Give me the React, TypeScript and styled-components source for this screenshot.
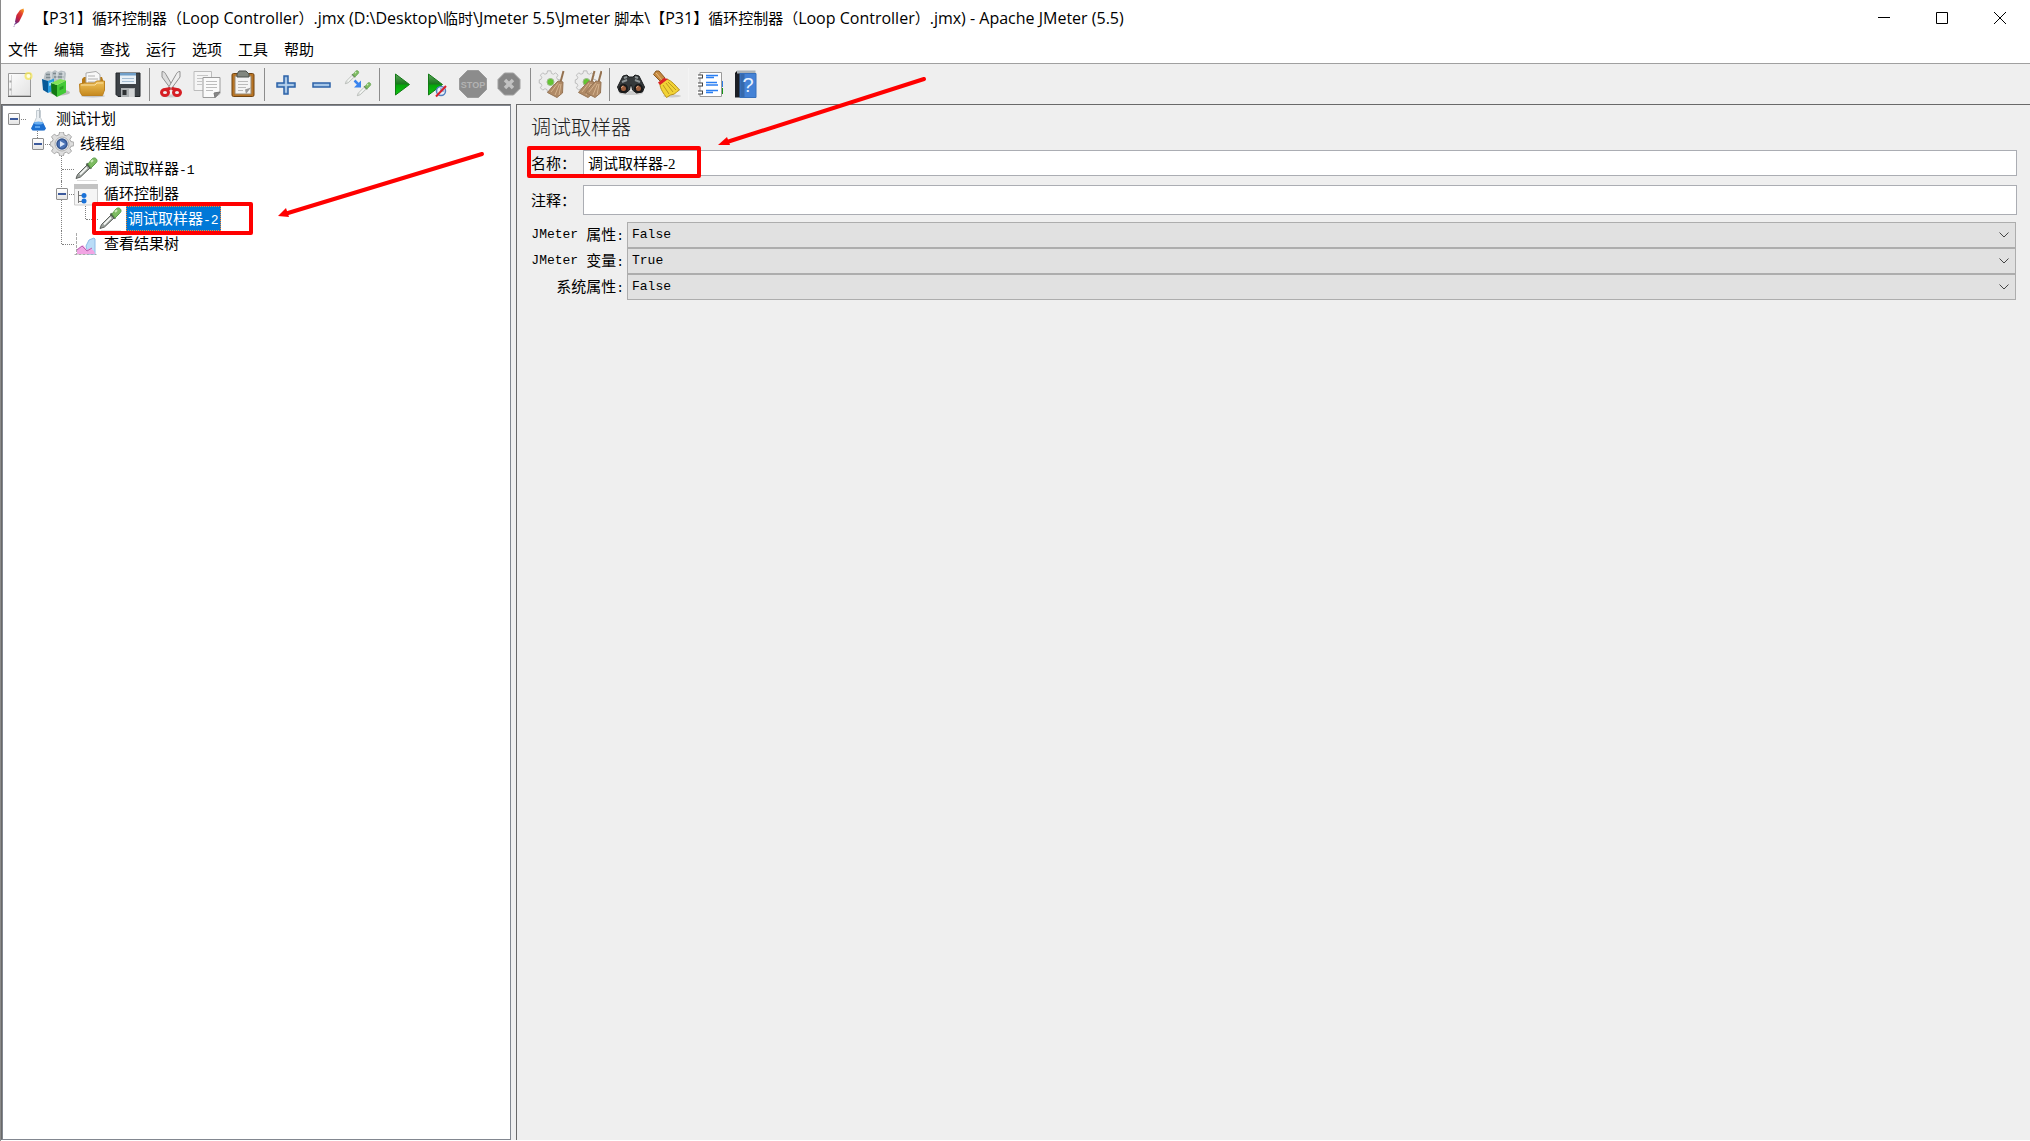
import React from "react";
import styled, { createGlobalStyle, css } from "styled-components";

const GlobalStyle = createGlobalStyle`
  * { box-sizing: border-box; }
  body { margin: 0; background: #fff; }
  button, input, select { font: inherit; color: inherit; margin: 0; }
`;

const uiFont = `"Open Sans", "Noto Sans CJK SC", sans-serif`;
const songFont = `"Noto Sans CJK SC", sans-serif`;

const Window = styled.div`
  position: relative;
  display: flex;
  flex-direction: column;
  min-height: 100vh;
  padding-bottom: 1px;
  border-left: 1px solid #8a8a8a;
  background: #fff;
  color: #000;
  font: 15px/20px ${songFont};
`;

const TitleBar = styled.header`
  display: flex;
  align-items: center;
  height: 36px;
  padding: 0 1px 0 10px;
  font: 15px/20px ${uiFont};
`;

const Title = styled.h1`
  flex: 1;
  margin: 0;
  padding-left: 9px;
  font: inherit;
  white-space: pre;
`;

const Latin = styled.span`
  font-size: 16px;
`;

const WindowButton = styled.button`
  display: flex;
  align-items: center;
  justify-content: center;
  width: 58px;
  height: 36px;
  padding: 0;
  border: 0;
  background: none;
`;

const MenuBar = styled.nav`
  display: flex;
  gap: 16px;
  height: 28px;
  padding: 3px 7px 0;
  border-bottom: 1px solid #a0a0a0;
`;

const MenuItem = styled.button`
  height: 20px;
  padding: 0;
  border: 0;
  background: none;
  font: 15px/20px ${uiFont};
`;

const ToolBar = styled.div`
  display: flex;
  align-items: center;
  height: 40px;
  padding: 0 1px;
  background: #efefef;
`;

const ToolButton = styled.button`
  display: flex;
  align-items: center;
  justify-content: center;
  width: 36px;
  height: 36px;
  padding: 0;
  border: 0;
  background: none;
`;

const Separator = styled.span<{ $faint?: boolean }>`
  width: 1px;
  height: 33px;
  margin: 0 3px;
  background: ${(p) => (p.$faint ? "#f4f4f4" : "#8c8c8c")};
`;

const Content = styled.main`
  flex: 1;
  display: grid;
  grid-template-columns: 510px minmax(0, 1fr);
  column-gap: 5px;
  background: #efefef;
`;

const TreePane = styled.section`
  position: relative;
  border: 1px solid #828790;
  border-top-color: #696969;
  border-left-color: #696969;
  box-shadow: inset 1px 1px 0 #828790;
  padding: 1px 0 0 1px;
  background: #fff;
`;

const Branch = styled.ul<{ $nested?: boolean }>`
  list-style: none;
  margin: 0;
  padding: 0 0 0 ${(p) => (p.$nested ? 24 : 0)}px;
`;

const Node = styled.li<{ $last?: boolean; $root?: boolean }>`
  position: relative;
  &::before {
    content: "";
    display: ${(p) => (p.$root ? "none" : "block")};
    position: absolute;
    left: 10px;
    top: 0;
    height: ${(p) => (p.$last ? "13px" : "100%")};
    border-left: 1px dotted #808080;
  }
`;

const NodeRow = styled.div`
  position: relative;
  display: flex;
  align-items: center;
  height: 25px;
  padding-left: 5px;
  &::before {
    content: "";
    position: absolute;
    left: 11px;
    top: 13px;
    width: 12px;
    border-top: 1px dotted #808080;
  }
`;

const Expander = styled.button`
  position: relative;
  display: flex;
  align-items: center;
  justify-content: center;
  width: 12px;
  height: 12px;
  margin-right: 6px;
  padding: 0;
  border: 1px solid #8f8f8f;
  border-radius: 1px;
  background: linear-gradient(#fff, #e4e4e4);
  &::before {
    content: "";
    width: 8px;
    height: 2px;
    background: #3c5a9c;
  }
`;

const ExpanderSpace = styled.span`
  width: 18px;
`;

const NodeIcon = styled.span`
  position: relative;
  display: flex;
  width: 24px;
  height: 24px;
  margin-right: 4px;
`;

const NodeLabel = styled.span<{ $selected?: boolean }>`
  height: 25px;
  padding: 0 2px;
  line-height: 24px;
  white-space: nowrap;
  ${(p) =>
    p.$selected &&
    css`
      color: #fff;
      background: #0078d7;
      outline: 1px dotted #ff8728;
      outline-offset: -1px;
    `}
`;

const Mono = styled.span`
  font: 13px/20px "Liberation Mono", monospace;
`;

const NodeHighlight = styled.span`
  position: absolute;
  left: 17px;
  top: -4px;
  width: 161px;
  height: 33px;
  border: 4px solid #f00;
  border-radius: 2px;
`;

const EditorPane = styled.section`
  padding: 8px 13px 0 14px;
  border-top: 1px solid #696969;
  border-left: 1px solid #696969;
`;

const Heading = styled.h2`
  margin: 0 0 9px;
  color: #222;
  font: 20px/28px ${songFont};
  font-weight: 300;
`;

const Field = styled.div`
  position: relative;
  display: flex;
  align-items: center;
  margin-bottom: 9px;
`;

const FieldLabel = styled.label`
  width: 52px;
  white-space: nowrap;
`;

const TextInput = styled.input<{ $tall?: boolean }>`
  flex: 1;
  min-width: 0;
  height: ${(p) => (p.$tall ? 30 : 26)}px;
  padding: 0 4px 2px;
  border: 1px solid #abadb3;
  border-radius: 0;
  outline: 0;
  background: #fff;
  font: 15px/20px "Liberation Serif", "Noto Sans CJK SC", serif;
`;

const FieldHighlight = styled.span`
  position: absolute;
  left: -4px;
  top: -4px;
  width: 174px;
  height: 32px;
  border: 4px solid #f00;
  border-radius: 2px;
`;

const Options = styled.div`
  display: grid;
  grid-template-columns: 93px minmax(0, 1fr);
  column-gap: 3px;
  margin-top: -2px;
  padding-right: 1px;
`;

const OptionLabel = styled.label`
  display: flex;
  align-items: center;
  justify-content: flex-end;
  gap: 8px;
  white-space: nowrap;
`;

const SelectBox = styled.div`
  position: relative;
  svg {
    position: absolute;
    right: 7px;
    top: 10px;
    pointer-events: none;
  }
`;

const Select = styled.select`
  display: block;
  appearance: none;
  width: 100%;
  height: 26px;
  padding: 0 4px;
  border: 1px solid #adadad;
  border-radius: 0;
  background: #e1e1e1;
  font: 13px/20px "Liberation Mono", monospace;
`;

const TreeArrow = styled.svg`
  position: absolute;
  left: 275px;
  top: 149px;
  pointer-events: none;
`;

const FieldArrow = styled.svg`
  position: absolute;
  left: 716px;
  top: 75px;
  pointer-events: none;
`;

function Svg({ children, size = 28 }: { children: React.ReactNode; size?: number }) {
  return (
    <svg width={size} height={size} viewBox={`0 0 ${size} ${size}`} aria-hidden="true">
      {children}
    </svg>
  );
}

function Feather() {
  return (
    <svg width="14" height="20" viewBox="0 0 14 20" aria-hidden="true">
      <defs>
        <linearGradient id="feather" x1="0.8" y1="0" x2="0.2" y2="1">
          <stop offset="0" stopColor="#f59a23" />
          <stop offset="0.3" stopColor="#e2402c" />
          <stop offset="0.65" stopColor="#c41f40" />
          <stop offset="1" stopColor="#6d2a7c" />
        </linearGradient>
      </defs>
      <path d="M12.500 0.500 L9 2 L5.500 7 L4 13.500 L5 16 L8 14 L11.500 7 L13 3Z" fill="url(#feather)" />
      <path d="M4.500 15 L3 18.500" stroke="#5b2a80" strokeWidth="1" strokeDasharray="2 1" />
    </svg>
  );
}

function NewIcon() {
  return (
    <Svg>
      <defs>
        <linearGradient id="page" x2="1" y2="1">
          <stop offset="0" stopColor="#fdfdfd" />
          <stop offset="1" stopColor="#e2e2e2" />
        </linearGradient>
      </defs>
      <path d="M2.500 3.500h22v22.500h-22z" fill="url(#page)" stroke="#9a9a9a" />
      <path d="M2 26.500h23" stroke="#666" />
      <path d="M5.500 5v20" stroke="#d4d4d4" />
      <path d="M3.500 11.500h2M3.500 19.500h2" stroke="#aaa" strokeWidth="2" />
      <circle cx="22.500" cy="6" r="4" fill="#f3e556" opacity="0.75" />
      <circle cx="22.500" cy="6" r="2" fill="#fffee0" />
    </Svg>
  );
}

function TemplatesIcon() {
  return (
    <Svg>
      <ellipse cx="18" cy="22.500" rx="10" ry="3" fill="#8c8c8c" opacity="0.5" />
      <path d="M1.500 9L3 3l3-2 4 1 3-2 3 2 3-1.500 4 1 1 2-1 8-12 3z" fill="#b9c1c5" />
      <path d="M4 4.500h4M11 3.500h3M17 4h4M4 7.500h5M12 7h10" stroke="#7d898f" strokeWidth="1.500" />
      <path d="M9 2v8M15 2v7M21 2v8" stroke="#e8ecee" />
      <path d="M0 9l6 2v12l-5-3z" fill="#075a99" />
      <path d="M6 11l6-2.500v12L6 23z" fill="#289ce0" />
      <path d="M7 13l4-1.500v3L7 16z" fill="#9edbf9" />
      <path d="M9 13l6 2v12l-5.500-4z" fill="#137813" />
      <path d="M15 15l9-4.500v12L15 27z" fill="#43c936" />
      <path d="M9 13l9-4 6 1.500-9 4.500z" fill="#81e356" />
      <path d="M17.500 17.500l4-2v3l-4 2z" fill="#2a9d24" />
    </Svg>
  );
}

function OpenIcon() {
  return (
    <Svg>
      <defs>
        <linearGradient id="folder" y2="1" x2="0">
          <stop offset="0" stopColor="#f1c45b" />
          <stop offset="1" stopColor="#c5881d" />
        </linearGradient>
      </defs>
      <ellipse cx="15" cy="26" rx="12" ry="1.500" fill="#999" opacity="0.5" />
      <path d="M4 9l2-2h18l1 3v6H4z" fill="#b77a16" />
      <path d="M8 3l10-1.500 4 3V17H8z" fill="#f8f8f8" stroke="#aaa" />
      <path d="M10 6h7M10 9h10M10 12h10" stroke="#b0b0b0" />
      <path d="M1.500 14l5-1h10l2-2h8v9l-2 5.500H4L2 22z" fill="url(#folder)" stroke="#bd8220" />
      <path d="M3 15h14l2-2h6" stroke="#f9dda0" fill="none" />
    </Svg>
  );
}

function SaveIcon() {
  return (
    <Svg>
      <path d="M2 3h24v23.500H4L2 24.500z" fill="#3d4247" stroke="#23272a" />
      <path d="M6 3h16v11H6z" fill="#e8f0f6" />
      <path d="M6 3h16v2.500H6z" fill="#6f9fc9" />
      <path d="M8 8.500h12M8 11.500h12" stroke="#a4bdd3" />
      <path d="M7 18h14v9H7z" fill="#aeb2b4" />
      <path d="M8.500 20h4v5h-4z" fill="#2d3032" />
      <path d="M15 19h5v8h-5z" fill="#d3d5d6" />
    </Svg>
  );
}

function CutIcon() {
  return (
    <Svg>
      <ellipse cx="14" cy="26" rx="10" ry="1.500" fill="#aaa" opacity="0.5" />
      <path d="M5 1.500c2 0 3 1 4 3l7.500 13-3 1L5 7z" fill="#ddd" stroke="#8f8f8f" />
      <path d="M23 1.500c-2 0-3 1-4 3l-7.500 13 3 1L23 7z" fill="#eee" stroke="#8f8f8f" />
      <g fill="none" stroke="#d61e24" strokeWidth="3">
        <ellipse cx="8" cy="22.500" rx="3.500" ry="3" />
        <ellipse cx="20" cy="22.500" rx="3.500" ry="3" />
        <path d="M8 19.500l5.500-1M20 19.500l-5.500-1" />
      </g>
    </Svg>
  );
}

function CopyIcon() {
  return (
    <Svg>
      <path d="M1 1.500h17.500v19H1z" fill="#f5f5f5" stroke="#bcbcbc" />
      <path d="M4 5.500h11M4 8.500h11M4 11.500h5M4 14.500h5" stroke="#c6c6c6" />
      <path d="M10 7.500h17v16l-5 4H10z" fill="#fafafa" stroke="#9b9b9b" />
      <path d="M13 11.500h11M13 14.500h11M13 17.500h11M13 20.500h7" stroke="#bcbcbc" />
      <path d="M27 22l-6 1 1 4.500z" fill="#888" stroke="#777" />
    </Svg>
  );
}

function PasteIcon() {
  return (
    <Svg>
      <rect x="3" y="3.500" width="22" height="23" rx="1.500" fill="#b87424" stroke="#714513" />
      <path d="M6 6h16v18H6z" fill="#f4f4f4" stroke="#9b8a72" />
      <path d="M8 4l2-3h7l3 3v3H8z" fill="#82877f" stroke="#4d514c" />
      <path d="M9 11.500h10M9 14.500h10M9 17.500h8M9 20.500h5" stroke="#bbb" />
      <path d="M22 17.500l-6 2 1 4.500z" fill="#999" />
    </Svg>
  );
}

function PlusIcon() {
  return (
    <Svg>
      <path d="M12 6h4v7h7v4h-7v7h-4v-7H5v-4h7z" fill="#92b8df" stroke="#2c62a8" strokeWidth="1.500" />
      <path d="M14 8v14M7 15h14" stroke="#c5daf0" />
    </Svg>
  );
}

function MinusIcon() {
  return (
    <Svg>
      <rect x="5" y="13" width="17" height="4" fill="#a5c6e8" stroke="#2c62a8" strokeWidth="1.500" />
    </Svg>
  );
}

function Dropper({ big }: { big?: boolean }) {
  return (
    <g>
      <path
        d="M2 21.500l1.500-4L13 8l3 3-9.500 9z"
        fill={big ? "#9da29e" : "#e2e5e2"}
        stroke={big ? "#5c615d" : "#a5aaa5"}
      />
      <path d="M6 17.500l7-7" stroke="#f4f6f4" strokeWidth="2" />
      <path d="M12.500 6.500l5 5" stroke={big ? "#4b5f48" : "#698062"} strokeWidth="2" />
      <path d="M14 7l4-5c2-2 5-1 5 2 0 1-1 2-2 3l-4 4z" fill="#7dbb61" stroke="#5d9c4a" />
      <path d="M17 5l2-2" stroke="#cbe8ba" strokeWidth="2" />
    </g>
  );
}

function ToggleIcon() {
  return (
    <Svg>
      <g transform="translate(0 0) scale(0.64)">
        <Dropper />
      </g>
      <g transform="translate(12 12) scale(0.64)">
        <Dropper />
      </g>
      <path d="M10.500 10.500l4 4" stroke="#3a84ee" strokeWidth="2.500" />
      <path d="M17 10.500v7h-7z" fill="#3a84ee" />
    </Svg>
  );
}

function PlayShape() {
  return (
    <g>
      <defs>
        <linearGradient id="play" x2="0" y2="1">
          <stop offset="0" stopColor="#5da75c" />
          <stop offset="0.480" stopColor="#17761b" />
          <stop offset="0.520" stopColor="#05a50a" />
          <stop offset="1" stopColor="#12c514" />
        </linearGradient>
      </defs>
      <path d="M8.500 4v21L22.500 14.500z" fill="url(#play)" stroke="#137a16" />
    </g>
  );
}

function PlayIcon() {
  return (
    <Svg>
      <PlayShape />
    </Svg>
  );
}

function PlayNoPauseIcon() {
  return (
    <Svg>
      <g transform="translate(-3 0)">
        <PlayShape />
      </g>
      <circle cx="18" cy="21" r="4.500" fill="#e8eef8" stroke="#5481c0" strokeWidth="1.500" />
      <path d="M18 18v3h3" stroke="#5481c0" fill="none" />
      <path d="M13 26.500l10-10.500" stroke="#d9212b" strokeWidth="2" />
    </Svg>
  );
}

function StopIcon() {
  return (
    <Svg>
      <path d="M8.500 0.500h11l8 8v11l-8 8h-11l-8-8v-11z" fill="#8c8c8c" stroke="#9b9b9b" />
      <text x="14" y="18" textAnchor="middle" fontFamily="Liberation Sans, sans-serif" fontWeight="700" fontSize="9" fill="#b3b3b3">
        STOP
      </text>
    </Svg>
  );
}

function ShutdownIcon() {
  return (
    <Svg>
      <path d="M9.500 3h9L25 9.500v9L18.500 25h-9L3 18.500v-9z" fill="#868686" stroke="#a0a0a0" />
      <path d="M10 10l8 8M18 10l-8 8" stroke="#c2c2c2" strokeWidth="3.500" />
    </Svg>
  );
}

const gearPath =
  "M10 1h4l.6 3 2.400 1 2.600-1.700 2.800 2.800L20.700 8.700l1 2.300 3 .6v3.800l-3 .6-1 2.300 1.700 2.600-2.800 2.800-2.600-1.700-2.400 1-.6 3h-4l-.6-3-2.400-1-2.600 1.700L1.600 20.900l1.700-2.600-1-2.300-2-.6v-3.800l2-.6 1-2.300L1.600 6.100l2.800-2.800L7 5l2.400-1z";

function Broom({ x }: { x: number }) {
  return (
    <g transform={`translate(${x} 0)`}>
      <path d="M17.500 1l-3 11" stroke="#94714f" strokeWidth="2" />
      <path d="M12 11l5 1-.5 11-5.500 4.500-9.500-5L6 17z" fill="#b08a66" stroke="#977555" />
      <path d="M12 13L5 22M13.500 14L9 25M15 14l-2 11" stroke="#d6b48f" />
    </g>
  );
}

function ClearIcon({ all }: { all?: boolean }) {
  return (
    <Svg>
      <g transform="translate(1 0) scale(0.85)">
        <path d={gearPath} fill="#ececec" stroke="#b5b5b5" />
      </g>
      <circle cx="12.500" cy="12" r="3.500" fill="#64c432" stroke="#9db98c" />
      {all && <Broom x={3} />}
      <Broom x={all ? 10 : 8} />
    </Svg>
  );
}

function SearchIcon() {
  return (
    <Svg>
      <ellipse cx="14" cy="23" rx="12" ry="2" fill="#aaa" opacity="0.5" />
      <path d="M6 6l4-1 2 2h4l2-2 4 1 5.500 11-2 5-6 1-4-3-1-5h-1l-1 5-4 3-6-1-2-5z" fill="#35393b" stroke="#1b1d1e" />
      <path d="M7 8l3-1M18 7l3 1M5 12l5-2M18 10l5 2" stroke="#8d9496" strokeWidth="2" />
      <circle cx="6.500" cy="18.500" r="3.500" fill="#9c5d3c" stroke="#191919" strokeWidth="2" />
      <circle cx="21.500" cy="18.500" r="3.500" fill="#9c5d3c" stroke="#191919" strokeWidth="2" />
      <path d="M4.500 18a2 2 0 0 1 2-2M19.500 18a2 2 0 0 1 2-2" stroke="#e6ab83" fill="none" />
    </Svg>
  );
}

function SearchResetIcon() {
  return (
    <Svg>
      <ellipse cx="19" cy="26" rx="9" ry="1.500" fill="#aaa" opacity="0.5" />
      <path d="M0.500 4.500L3 1l3 0 6 7-4 4z" fill="#c58a42" stroke="#89571f" />
      <path d="M3 3l6 7" stroke="#eabd7d" />
      <path d="M7 14l7-5c5 2 9 7 12.500 11l-3 2-2 2-4 1-4 2.500C11 24 7 19 7 14z" fill="#f2d335" stroke="#b8901a" />
      <path d="M10 15l6 9M13 13l7 9M15 12l8 8" stroke="#ba9720" />
      <path d="M5 12.500l6-4.500 4 1-8 6z" fill="#dc2424" />
    </Svg>
  );
}

function FunctionIcon() {
  return (
    <Svg>
      <path d="M25 11h2v6h-2z" fill="#2f7de5" />
      <path d="M25 18h2v6h-2z" fill="#149414" />
      <path d="M4 2.500h21.500v24H4z" fill="#fff" stroke="#9a9a9a" />
      <path d="M10 5.500h12M10 7.500h8M10 12.500h11M10 15h12M10 20.500h12M10 22.500h7" stroke="#2b7ff2" strokeWidth="1.500" />
      <path d="M2 6.500h5M2 14.500h5M2 22.500h5" stroke="#444" strokeWidth="4" />
      <path d="M1 6.500h5M1 14.500h5M1 22.500h5" stroke="#fff" strokeWidth="2" />
    </Svg>
  );
}

function HelpIcon() {
  return (
    <Svg>
      <path d="M5 0.500h18.500V4H4z" fill="#aab2b8" />
      <path d="M3 3l2-2v25.500H3z" fill="#111" />
      <path d="M3 3.500h5v24H3z" fill="#1b1f26" />
      <path d="M8 3.500h16v24H8z" fill="#4482d6" stroke="#3670bd" />
      <path d="M8.500 4h4v23h-4z" fill="#3669ac" />
      <text x="16" y="22" textAnchor="middle" fontFamily="Liberation Sans, sans-serif" fontSize="20" fill="#e8f2ff">
        ?
      </text>
    </Svg>
  );
}

function FlaskIcon() {
  return (
    <Svg size={24}>
      <path d="M10.500 3.500h4v7l4.500 10.500-1.500 2h-10l-1.500-2 4.500-10.500z" fill="#e9eef2" stroke="#c3cbd1" />
      <path d="M8 15.500h9l3 6-1.500 2h-12l-1.500-2z" fill="#1c6fd0" />
      <ellipse cx="12.500" cy="16" rx="4.500" ry="1.500" fill="#69aef0" />
      <path d="M9 20h5" stroke="#5ba4ee" strokeWidth="2" />
      <path d="M13.500 1v10" stroke="#b5bdc3" />
    </Svg>
  );
}

function GearIcon() {
  return (
    <Svg size={24}>
      <g transform="translate(0 -1) scale(0.960)">
        <path d={gearPath} fill="#dedede" stroke="#a3a3a3" />
      </g>
      <circle cx="12" cy="12" r="7" fill="#f0f0f0" stroke="#b0b0b0" />
      <circle cx="12" cy="12" r="5" fill="#4a72b5" stroke="#34558f" strokeWidth="1.500" />
      <path d="M10 9v6l5-3z" fill="#dce8fa" />
    </Svg>
  );
}

function DropperIcon() {
  return (
    <Svg size={24}>
      <path d="M3 23.500h20" stroke="#ddd" />
      <Dropper big />
    </Svg>
  );
}

function ControllerIcon() {
  return (
    <Svg size={24}>
      <path d="M0.500 2.500h23v20.500h-23z" fill="#f5f5f5" stroke="#ccc" />
      <path d="M0 2h24v5H0z" fill="#c3c3c3" />
      <path d="M4.500 9v12M4.500 13.500h4M4.500 19.500h4" stroke="#777" fill="none" />
      <circle cx="10" cy="13.500" r="2.500" fill="#1a72d8" />
      <circle cx="10" cy="19" r="2.500" fill="#1a72d8" />
    </Svg>
  );
}

function ResultsIcon() {
  return (
    <Svg size={24}>
      <path d="M2.500 1v22M0.500 22.500h22" stroke="#aaa" strokeDasharray="3 1" />
      <path d="M12 14l3-6 5-2 1 1v15h-7z" fill="#b9dcf7" stroke="#8dbbe6" />
      <path d="M3 22v-5l3-2 3-2 4 5 3-2 4 3 1 3z" fill="#f2a5e4" />
      <path d="M3 18l5-4 5 5 5-3" stroke="#b565b0" fill="none" />
    </Svg>
  );
}

type Tool = { label: string; icon: React.ReactNode; disabled?: boolean };

const toolGroups: Tool[][] = [
  [
    { label: "新建", icon: <NewIcon /> },
    { label: "模板", icon: <TemplatesIcon /> },
    { label: "打开", icon: <OpenIcon /> },
    { label: "保存", icon: <SaveIcon /> },
  ],
  [
    { label: "剪切", icon: <CutIcon /> },
    { label: "复制", icon: <CopyIcon /> },
    { label: "粘贴", icon: <PasteIcon /> },
  ],
  [
    { label: "全部展开", icon: <PlusIcon /> },
    { label: "全部折叠", icon: <MinusIcon /> },
    { label: "切换", icon: <ToggleIcon /> },
  ],
  [
    { label: "启动", icon: <PlayIcon /> },
    { label: "不停顿开始", icon: <PlayNoPauseIcon /> },
    { label: "停止", icon: <StopIcon />, disabled: true },
    { label: "关闭", icon: <ShutdownIcon />, disabled: true },
  ],
  [
    { label: "清除", icon: <ClearIcon /> },
    { label: "清除全部", icon: <ClearIcon all /> },
  ],
  [
    { label: "查找", icon: <SearchIcon /> },
    { label: "重置搜索", icon: <SearchResetIcon /> },
  ],
  [
    { label: "函数助手", icon: <FunctionIcon /> },
    { label: "帮助", icon: <HelpIcon /> },
  ],
];

type TreeItem = {
  name: string;
  suffix?: string;
  icon: React.ReactNode;
  selected?: boolean;
  children?: TreeItem[];
};

const plan: TreeItem[] = [
  {
    name: "测试计划",
    icon: <FlaskIcon />,
    children: [
      {
        name: "线程组",
        icon: <GearIcon />,
        children: [
          { name: "调试取样器", suffix: "-1", icon: <DropperIcon /> },
          {
            name: "循环控制器",
            icon: <ControllerIcon />,
            children: [{ name: "调试取样器", suffix: "-2", icon: <DropperIcon />, selected: true }],
          },
          { name: "查看结果树", icon: <ResultsIcon /> },
        ],
      },
    ],
  },
];

function Tree({ items, nested }: { items: TreeItem[]; nested?: boolean }) {
  return (
    <Branch $nested={nested}>
      {items.map((item, i) => (
        <Node key={item.name} $root={!nested} $last={i === items.length - 1}>
          <NodeRow>
            {item.children ? <Expander aria-label={`折叠 ${item.name}`} /> : <ExpanderSpace />}
            <NodeIcon>{item.icon}</NodeIcon>
            <NodeLabel $selected={item.selected}>
              {item.name}
              {item.suffix && <Mono>{item.suffix}</Mono>}
            </NodeLabel>
            {item.selected && <NodeHighlight />}
          </NodeRow>
          {item.children && <Tree items={item.children} nested />}
        </Node>
      ))}
    </Branch>
  );
}

const options = [
  { id: "jmeter-props", prefix: "JMeter", label: "属性", value: "False" },
  { id: "jmeter-vars", prefix: "JMeter", label: "变量", value: "True" },
  { id: "system-props", prefix: "", label: "系统属性", value: "False" },
];

const windowTitle =
  "【P31】循环控制器（Loop Controller）.jmx (D:\\Desktop\\临时\\Jmeter 5.5\\Jmeter 脚本\\【P31】循环控制器（Loop Controller）.jmx) - Apache JMeter (5.5)";

export default function App() {
  return (
    <>
      <GlobalStyle />
      <Window>
        <TitleBar>
          <Feather />
          <Title>
            {windowTitle
              .split(/([\x20-\x7e]+)/)
              .map((part, i) => (i % 2 ? <Latin key={i}>{part}</Latin> : part))}
          </Title>
          <WindowButton aria-label="最小化">
            <svg width="12" height="12"><path d="M0 5.500h12" stroke="#000" /></svg>
          </WindowButton>
          <WindowButton aria-label="最大化">
            <svg width="12" height="12"><path d="M.5.5h11v11H.5z" stroke="#000" fill="none" /></svg>
          </WindowButton>
          <WindowButton aria-label="关闭窗口">
            <svg width="12" height="12"><path d="M0 0l12 12M12 0L0 12" stroke="#000" /></svg>
          </WindowButton>
        </TitleBar>
        <MenuBar>
          {["文件", "编辑", "查找", "运行", "选项", "工具", "帮助"].map((m) => (
            <MenuItem key={m}>{m}</MenuItem>
          ))}
        </MenuBar>
        <ToolBar role="toolbar">
          {toolGroups.map((group, g) => (
            <React.Fragment key={g}>
              {g > 0 && <Separator $faint={g === toolGroups.length - 1} />}
              {group.map((tool) => (
                <ToolButton key={tool.label} aria-label={tool.label} disabled={tool.disabled}>
                  {tool.icon}
                </ToolButton>
              ))}
            </React.Fragment>
          ))}
        </ToolBar>
        <Content>
          <TreePane>
            <Tree items={plan} />
          </TreePane>
          <EditorPane>
            <Heading>调试取样器</Heading>
            <Field>
              <FieldLabel htmlFor="name">名称：</FieldLabel>
              <TextInput id="name" defaultValue="调试取样器-2" />
              <FieldHighlight />
            </Field>
            <Field>
              <FieldLabel htmlFor="comment">注释：</FieldLabel>
              <TextInput id="comment" $tall />
            </Field>
            <Options>
              {options.map((o) => (
                <React.Fragment key={o.id}>
                  <OptionLabel htmlFor={o.id}>
                    {o.prefix && <Mono>{o.prefix}</Mono>}
                    <span>
                      {o.label}
                      <Mono>:</Mono>
                    </span>
                  </OptionLabel>
                  <SelectBox>
                    <Select id={o.id} defaultValue={o.value}>
                      <option>True</option>
                      <option>False</option>
                    </Select>
                    <svg width="10" height="6">
                      <path d="M.5.5L5 5L9.500.5" stroke="#444" fill="none" />
                    </svg>
                  </SelectBox>
                </React.Fragment>
              ))}
            </Options>
          </EditorPane>
        </Content>
        <FieldArrow width="212" height="74">
          <path d="M207 4L10 67" stroke="#f00" strokeWidth="4" strokeLinecap="round" />
          <path d="M1 70L10 62L13 70Z" fill="#f00" />
        </FieldArrow>
        <TreeArrow width="212" height="74">
          <path d="M206 5L12 64" stroke="#f00" strokeWidth="4" strokeLinecap="round" />
          <path d="M2 67L10 59L13 68Z" fill="#f00" />
        </TreeArrow>
      </Window>
    </>
  );
}
